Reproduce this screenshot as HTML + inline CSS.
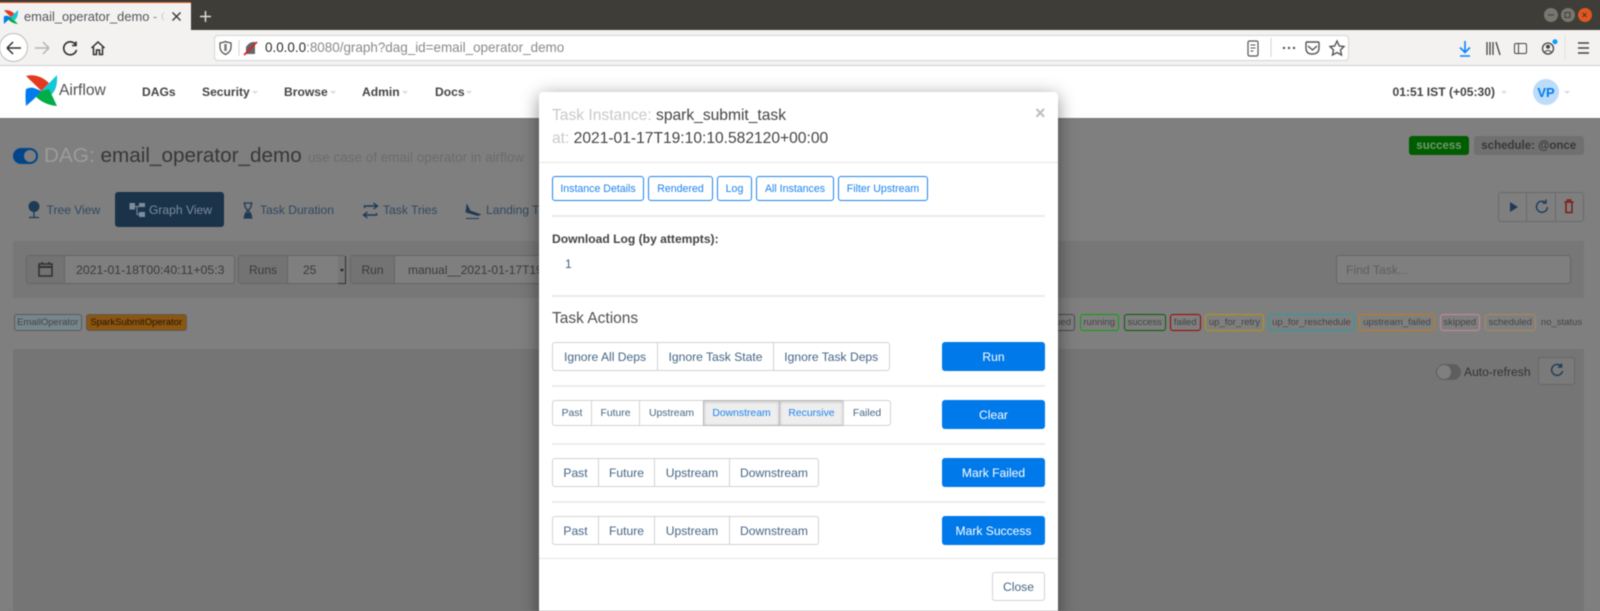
<!DOCTYPE html>
<html><head><meta charset="utf-8"><title>email_operator_demo</title>
<style>
html,body{margin:0;padding:0;width:1600px;height:605px;overflow:hidden;background:#7f7f7f;font-family:"Liberation Sans",sans-serif;}
#w{position:absolute;left:-6px;top:-6px;width:1612px;height:617px;overflow:hidden;filter:blur(.4px);background:#7f7f7f;}
#i{position:absolute;left:6px;top:6px;width:1600px;height:605px;}
.c{display:flex;align-items:center;justify-content:center;}
.t{position:absolute;white-space:nowrap;line-height:1;}
.b{position:absolute;box-sizing:border-box;}
.g{position:absolute;box-sizing:border-box;display:flex;align-items:center;justify-content:center;white-space:nowrap;background:#fff;border:1px solid #d2d2d2;color:#456585;}
.s{font-size:12.100px;height:29px;}
.x{font-size:10.400px;height:26px;}
.l{border-color:#1c83ee;border-radius:3px;color:#1c83ee;font-size:10.600px;top:176px;height:25px;}
.on{background:#eee;border-color:#b5b5b5;color:#1c83ee;box-shadow:inset 0 1px 3px rgba(0,0,0,.18);}
.blue{position:absolute;left:942px;width:103px;height:29px;background:#0079ea;color:#fff;font-size:12.100px;border-radius:3px;display:flex;align-items:center;justify-content:center;}
.hr{position:absolute;left:552px;width:493px;height:1.500px;background:#ececec;}
.leg{position:absolute;top:314px;height:17px;box-sizing:border-box;border:1.500px solid #555;border-radius:3px;font-size:9.500px;color:#444;display:flex;align-items:center;justify-content:center;white-space:nowrap;}
.nav{position:absolute;top:85px;font-size:12.100px;font-weight:bold;color:#444;line-height:14px;white-space:nowrap;}
.caret{position:absolute;width:0;height:0;border-left:3px solid transparent;border-right:3px solid transparent;border-top:3px solid #e0d8e0;}
.tb{position:absolute;top:204px;font-size:12.100px;line-height:1;color:#30495f;white-space:nowrap;}
svg{position:absolute;overflow:visible;}
</style></head><body><div id="w"><div id="i">

<!-- browser chrome -->
<div class="b" style="left:-6px;top:-6px;width:1612px;height:36px;background:#3e3d37;"></div>
<div class="b" style="left:-6px;top:2px;width:197px;height:28px;background:#f3f2f1;border-top:1.500px solid #e2561e;"></div>
<svg style="left:4px;top:10px" width="14" height="14" viewBox="0 0 31 31"><path d="M0 1Q12-2 23 8L15.500 16Z" fill="#e43921"/><path d="M31 0Q32 14 24 23L15.500 16Z" fill="#11c8d8"/><path d="M31 31Q18 30 9 21L15.500 16Z" fill="#00ad46"/><path d="M0 31Q-1 20 0 14Q4 12 8 13L15.500 16Z" fill="#017cee"/></svg>
<div class="t" style="left:24px;top:8px;font-size:12.900px;line-height:18px;color:#55555a;width:141px;overflow:hidden;">email_operator_demo - O</div>
<div class="b" style="left:150px;top:6px;width:16px;height:20px;background:linear-gradient(to right,rgba(243,242,241,0),#f3f2f1);"></div>
<svg style="left:171px;top:11px" width="11" height="11"><path d="M1.500 1.500L9.500 9.500M9.500 1.500L1.500 9.500" stroke="#333" stroke-width="1.300"/></svg>
<svg style="left:199px;top:10px" width="13" height="13"><path d="M6.500 1V12M1 6.500H12" stroke="#ddd" stroke-width="1.500"/></svg>
<div class="b" style="left:1544px;top:7.500px;width:14px;height:14px;border-radius:50%;background:#77766f;"></div>
<div class="b" style="left:1561px;top:7.500px;width:14px;height:14px;border-radius:50%;background:#77766f;"></div>
<div class="b" style="left:1578px;top:7.500px;width:14px;height:14px;border-radius:50%;background:#e2561e;"></div>
<svg style="left:1544px;top:7.500px" width="48" height="14"><path d="M4 7H10" stroke="#3e3d37"/><rect x="21" y="4.500" width="5" height="5" fill="none" stroke="#3e3d37"/><path d="M38.500 5L42.500 9M42.500 5L38.500 9" stroke="#3e3d37"/></svg>

<div class="b" style="left:-6px;top:30px;width:1612px;height:36px;background:#f3f2f1;border-bottom:1px solid #cfcfcf;"></div>
<div class="b" style="left:-1px;top:33px;width:29px;height:29px;border-radius:50%;background:#fff;border:1px solid #bdbdbd;"></div>
<svg style="left:0;top:30px" width="110" height="36"><path d="M7 18H21M7 18L13 12M7 18L13 24" fill="none" stroke="#2e2e2e" stroke-width="1.500"/><path d="M35 18H49M49 18L43 12M49 18L43 24" fill="none" stroke="#b4b4b4" stroke-width="1.500"/><path d="M75.500 14.500A6.500 6.500 0 1 0 76.500 20M76 11.500V15.500H72" fill="none" stroke="#2e2e2e" stroke-width="1.600"/><path d="M91.500 18L98 12L104.500 18M93.500 17V24.500H96.500V20H99.500V24.500H102.500V17" fill="none" stroke="#2e2e2e" stroke-width="1.500"/></svg>
<div class="b" style="left:214px;top:35px;width:1135px;height:26px;background:#fff;border:1px solid #d4d4d4;border-radius:4px;"></div>
<svg style="left:214px;top:35px" width="60" height="26"><path d="M6 8Q11 7 11.500 6.500Q12 7 17 8V12Q17 17 11.500 19.500Q6 17 6 12Z" fill="none" stroke="#555" stroke-width="1.300"/><path d="M11.500 9V16" stroke="#777" stroke-width="2.500"/><path d="M25 5V21" stroke="#d4d4d4"/><path d="M32 19V12Q36 6 41 7V19Z" fill="#666"/><path d="M30 20L43 7" stroke="#e01b24" stroke-width="1.600"/></svg>
<div class="t" style="left:265px;top:41px;font-size:13.450px;color:#8a8a8a;"><span style="color:#2b2b2b">0.0.0.0</span>:8080/graph?dag_id=email_operator_demo</div>
<svg style="left:1244px;top:38px" width="110" height="22"><rect x="4" y="3" width="10" height="15" rx="1.500" fill="none" stroke="#555" stroke-width="1.200"/><path d="M6.500 7H11.500M6.500 10H11.500M6.500 13H9.500" stroke="#555"/><path d="M27 0V19" stroke="#d4d4d4"/><circle cx="40" cy="10" r="1.200" fill="#555"/><circle cx="45" cy="10" r="1.200" fill="#555"/><circle cx="50" cy="10" r="1.200" fill="#555"/><path d="M62 4H74Q75 4 75 5V10Q75 16 68 16Q62 16 62 10V5Q62 4 63 4ZM64 8L68.500 12L73 8" fill="none" stroke="#555" stroke-width="1.400"/><path d="M93 3L95.300 8L100 8.500L96.500 12L97.500 17L93 14.500L88.500 17L89.500 12L86 8.500L90.700 8Z" fill="none" stroke="#555" stroke-width="1.400"/></svg>
<svg style="left:1454px;top:38px" width="140" height="22"><path d="M11 3V14M6 9.500L11 14.500L16 9.500M6 18H16" fill="none" stroke="#0a84ff" stroke-width="1.600"/><path d="M33 4V17M36 4V17M39 4V17M42 4L46 17" fill="none" stroke="#444" stroke-width="1.300"/><circle cx="94" cy="10.500" r="5.500" fill="none" stroke="#444" stroke-width="1.300"/><circle cx="94" cy="8.800" r="2" fill="#444"/><path d="M90.500 14Q94 11 97.500 14" stroke="#444" fill="none"/><circle cx="101" cy="3.700" r="2.500" fill="#0a9cff"/><path d="M111 -3V21" stroke="#e0e0e0"/></svg>
<div class="b" style="left:1514px;top:43px;width:13px;height:11px;border:1.300px solid #444;border-radius:2px;"></div>
<div class="b" style="left:1518px;top:43px;width:1px;height:11px;background:#444;"></div>
<svg style="left:1578px;top:41px" width="12" height="14"><path d="M0 2H11M0 7H11M0 12H11" stroke="#444" stroke-width="1.500"/></svg>

<!-- page nav -->
<div class="b" style="left:-6px;top:66px;width:1612px;height:53px;background:#fff;border-bottom:1px solid #777;"></div>
<svg style="left:26px;top:75px" width="31" height="31" viewBox="0 0 31 31"><path d="M0 1Q12-2 23 8L15.500 16Z" fill="#e43921"/><path d="M31 0Q32 14 25 20L15.500 16Z" fill="#11c8d8"/><path d="M31 31Q18 30 9 21L15.500 16L23 14Z" fill="#00ad46"/><path d="M0 31Q-1 20 0 14Q4 12 8 13L15.500 16L8 24Z" fill="#017cee"/></svg>
<div class="t" style="left:59px;top:83px;font-size:15.600px;color:#51504f;">Airflow</div>
<div class="nav" style="left:142px;">DAGs</div>
<div class="nav" style="left:202px;">Security</div><div class="caret" style="left:252px;top:91px"></div>
<div class="nav" style="left:284px;">Browse</div><div class="caret" style="left:330px;top:91px"></div>
<div class="nav" style="left:362px;">Admin</div><div class="caret" style="left:402px;top:91px"></div>
<div class="nav" style="left:435px;">Docs</div><div class="caret" style="left:466px;top:91px"></div>
<div class="nav" style="left:1392.500px;">01:51 IST (+05:30)</div><div class="caret" style="left:1501px;top:91px"></div>
<div class="b c" style="left:1533px;top:79px;width:26px;height:26px;border-radius:50%;background:#bcdcfa;color:#017cee;font-size:13px;font-weight:bold;">VP</div>
<div class="caret" style="left:1564px;top:91px"></div>

<!-- dimmed page -->
<div class="b" style="left:13px;top:148px;width:25px;height:16px;border-radius:8px;background:#00458a;"></div>
<div class="b" style="left:24px;top:150px;width:12px;height:12px;border-radius:50%;background:#7f7f7f;"></div>
<div class="t" style="left:44px;top:145.500px;font-size:20.700px;color:#9c9c9c;">DAG:</div>
<div class="t" style="left:100.500px;top:145.500px;font-size:20.700px;color:#373737;">email_operator_demo</div>
<div class="t" style="left:308px;top:151px;font-size:13.500px;color:#6c6c6c;">use case of email operator in airflow</div>
<div class="b c" style="left:1409px;top:136px;width:60px;height:19px;border-radius:3px;background:#005c00;color:#6d9a6d;font-size:11.500px;font-weight:bold;">success</div>
<div class="b c" style="left:1474px;top:136px;width:109.500px;height:19px;border-radius:3px;background:#707070;color:#373737;font-size:11.500px;font-weight:bold;">schedule: @once</div>

<div class="b" style="left:115px;top:192px;width:109px;height:35px;border-radius:3px;background:#1a3349;"></div>
<div class="tb" style="left:46.500px;">Tree View</div>
<div class="tb" style="left:149px;color:#7c8d9e;">Graph View</div>
<div class="tb" style="left:260px;">Task Duration</div>
<div class="tb" style="left:383px;">Task Tries</div>
<div class="tb" style="left:486px;">Landing Times</div>
<svg style="left:25px;top:200px" width="480" height="22"><circle cx="9" cy="6.500" r="5.500" fill="#1e3a55"/><path d="M9 12V17M4 17.500H14" stroke="#1e3a55" stroke-width="1.300"/><path d="M104.500 3H110V9.500H104.500ZM114 3H120V7H114ZM114 12H120V17H114ZM110 6H114V7H112.500V14H114V15H111.500V7H110Z" fill="#7c8d9e"/><g transform="translate(3.500 0)"><path d="M215 3H224M215 18H224M216 3Q216 8 219.500 10.500Q216 13 216 18H223Q223 13 219.500 10.500Q223 8 223 3" fill="none" stroke="#1e3a55" stroke-width="1.300"/><path d="M216 18Q216 14 219.500 12Q223 14 223 18Z" fill="#1e3a55"/></g><g transform="translate(5.500 0)"><path d="M334 8V6H346M343 3L347 6L343 9M346 13V15H334M337 12L333 15L337 18" fill="none" stroke="#1e3a55" stroke-width="1.400"/></g><g transform="translate(5 0)"><path d="M436 18.500H449M437 5L440 11L450 14.500L448 15.500L436 12Z" fill="#1e3a55" stroke="#1e3a55"/></g></svg>

<div class="b" style="left:1498px;top:192px;width:85.500px;height:30px;border:1px solid #6a6a6a;border-radius:3px;"></div>
<div class="b" style="left:1526px;top:192px;width:1px;height:30px;background:#6a6a6a;"></div>
<div class="b" style="left:1555px;top:192px;width:1px;height:30px;background:#6a6a6a;"></div>
<svg style="left:1498px;top:192px" width="85" height="30"><path d="M12 10L20 15L12 20Z" fill="#1d3b58"/><path d="M47.500 10.500A5.500 5.500 0 1 0 49.500 15M48 7.500V11H44.500" fill="none" stroke="#1d3b58" stroke-width="1.400"/><path d="M66.500 10H75.500M68 10V20.500H74V10M69.500 10V8H72.500V10" fill="none" stroke="#7e1c14" stroke-width="1.500"/></svg>

<div class="b" style="left:13px;top:241px;width:1570.500px;height:57px;background:#777;"></div>
<div class="b" style="left:26px;top:255px;width:209px;height:29px;border:1px solid #656565;border-radius:3px;background:#7f7f7f;"></div>
<div class="b" style="left:27px;top:256px;width:38px;height:27px;background:#737373;border-right:1px solid #656565;"></div>
<svg style="left:38px;top:261px" width="16" height="17"><rect x="1" y="3" width="13" height="12" fill="none" stroke="#2f2f2f" stroke-width="1.500"/><path d="M1 6H14" stroke="#2f2f2f" stroke-width="2"/><path d="M4 1V3M11 1V3" stroke="#2f2f2f" stroke-width="1.500"/></svg>
<div class="t" style="left:76px;top:264px;font-size:12.300px;color:#3a3a3a;width:149px;overflow:hidden;">2021-01-18T00:40:11+05:30</div>
<div class="b" style="left:238px;top:255px;width:107.500px;height:29px;border:1px solid #656565;border-radius:3px;background:#7f7f7f;"></div>
<div class="b c" style="left:239px;top:256px;width:49px;height:27px;background:#737373;border-right:1px solid #656565;color:#3a3a3a;font-size:12px;">Runs</div>
<div class="t" style="left:303px;top:264px;font-size:12px;color:#3a3a3a;">25</div>
<div class="b" style="left:338px;top:256px;width:7.500px;height:28px;background:#777;border-right:1.500px solid #333;border-bottom:1.500px solid #333;"></div>
<div class="b" style="left:340px;top:269px;width:0;height:0;border-left:2px solid transparent;border-right:2px solid transparent;border-top:3px solid #222;"></div>
<div class="b" style="left:350px;top:255px;width:194px;height:29px;border:1px solid #656565;border-right:0;border-radius:3px 0 0 3px;background:#7f7f7f;"></div>
<div class="b c" style="left:351px;top:256px;width:44px;height:27px;background:#737373;border-right:1px solid #656565;color:#3a3a3a;font-size:12px;">Run</div>
<div class="t" style="left:408px;top:264px;font-size:12px;color:#3a3a3a;">manual__2021-01-17T19:10</div>
<div class="b" style="left:1335.500px;top:255px;width:235.500px;height:29px;border:1px solid #656565;border-radius:3px;background:#7f7f7f;"></div>
<div class="t" style="left:1346px;top:264px;font-size:12.200px;color:#5e5e5e;">Find Task...</div>

<div class="leg" style="left:13.500px;width:68.500px;background:#76878c;border-color:#5a5a5a;">EmailOperator</div>
<div class="leg" style="left:86px;width:100.500px;background:#8b5512;border-color:#5a5a5a;color:#241503;">SparkSubmitOperator</div>
<div class="leg" style="left:1040px;width:35px;border-color:#4a4a4a;justify-content:flex-end;padding-right:3px;">ued</div>
<div class="leg" style="left:1079.500px;width:39.500px;border-color:#0aa00a;">running</div>
<div class="leg" style="left:1124px;width:41.500px;border-color:#0a5a0a;">success</div>
<div class="leg" style="left:1170px;width:30.500px;border-color:#a00000;">failed</div>
<div class="leg" style="left:1205px;width:59px;border-color:#b8960a;">up_for_retry</div>
<div class="leg" style="left:1268px;width:87px;border-color:#20a0a0;">up_for_reschedule</div>
<div class="leg" style="left:1359px;width:76px;border-color:#c87a10;">upstream_failed</div>
<div class="leg" style="left:1439.500px;width:40.500px;border-color:#c88a9a;">skipped</div>
<div class="leg" style="left:1484.500px;width:51.500px;border-color:#a88a5e;">scheduled</div>
<div class="leg" style="left:1541px;width:41px;border:0;">no_status</div>

<div class="b" style="left:13px;top:349px;width:1570.500px;height:262px;background:#757575;"></div>
<div class="b" style="left:1436px;top:364px;width:24.500px;height:16px;border-radius:8px;background:#5e5e5e;"></div>
<div class="b" style="left:1437px;top:365px;width:14px;height:14px;border-radius:50%;background:#7f7f7f;"></div>
<div class="t" style="left:1464px;top:365.500px;font-size:12.100px;color:#333;">Auto-refresh</div>
<div class="b" style="left:1538px;top:357px;width:37px;height:28px;border:1px solid #666;border-radius:3px;background:#7a7a7a;"></div>
<svg style="left:1549px;top:362px" width="16" height="16"><path d="M12 4A5.500 5.500 0 1 0 13.500 9M12.500 1.500V5H9" fill="none" stroke="#1d3b58" stroke-width="1.400"/></svg>

<!-- modal -->
<div class="b" style="left:539px;top:92px;width:519px;height:530px;background:#fff;border-radius:4px;box-shadow:0 4px 18px rgba(0,0,0,.45);"></div>
<div class="t" style="left:552px;top:108px;font-size:15.600px;color:#c9c9c9;">Task Instance: <span style="color:#444">spark_submit_task</span></div>
<div class="t" style="left:552px;top:131px;font-size:15.600px;color:#c9c9c9;">at: <span style="color:#444">2021-01-17T19:10:10.582120+00:00</span></div>
<div class="t" style="left:1035px;top:104px;font-size:18px;font-weight:bold;color:#bdbdbd;">×</div>
<div class="b" style="left:539px;top:162px;width:519px;height:1px;background:#e6e6e6;"></div>

<div class="g l" style="left:552px;width:92px;">Instance Details</div>
<div class="g l" style="left:648px;width:65px;">Rendered</div>
<div class="g l" style="left:717px;width:35px;">Log</div>
<div class="g l" style="left:756px;width:78px;">All Instances</div>
<div class="g l" style="left:838px;width:90px;">Filter Upstream</div>
<div class="hr" style="top:215px"></div>
<div class="t" style="left:552px;top:232.500px;font-size:12.100px;font-weight:bold;color:#444;">Download Log (by attempts):</div>
<div class="t" style="left:565px;top:258px;font-size:12px;color:#3a5f85;">1</div>
<div class="hr" style="top:295px"></div>
<div class="t" style="left:552px;top:311px;font-size:15.500px;color:#51504f;">Task Actions</div>

<div class="g s" style="left:552px;top:342px;width:106px;border-radius:3px 0 0 3px;">Ignore All Deps</div>
<div class="g s" style="left:657px;top:342px;width:117px;">Ignore Task State</div>
<div class="g s" style="left:773px;top:342px;width:116.500px;border-radius:0 3px 3px 0;">Ignore Task Deps</div>
<div class="blue" style="top:342px">Run</div>
<div class="hr" style="top:385px"></div>

<div class="g x" style="left:552px;top:400px;width:40px;border-radius:3px 0 0 3px;">Past</div>
<div class="g x" style="left:591px;top:400px;width:49px;">Future</div>
<div class="g x" style="left:639px;top:400px;width:65px;">Upstream</div>
<div class="g x on" style="left:703px;top:400px;width:77px;">Downstream</div>
<div class="g x on" style="left:779px;top:400px;width:65px;">Recursive</div>
<div class="g x" style="left:843px;top:400px;width:48px;border-radius:0 3px 3px 0;">Failed</div>
<div class="blue" style="top:400px">Clear</div>
<div class="hr" style="top:443px"></div>

<div class="g s" style="left:552px;top:458px;width:47px;border-radius:3px 0 0 3px;">Past</div>
<div class="g s" style="left:598px;top:458px;width:57px;">Future</div>
<div class="g s" style="left:654px;top:458px;width:76px;">Upstream</div>
<div class="g s" style="left:729px;top:458px;width:90px;border-radius:0 3px 3px 0;">Downstream</div>
<div class="blue" style="top:458px">Mark Failed</div>
<div class="hr" style="top:501px"></div>

<div class="g s" style="left:552px;top:516px;width:47px;border-radius:3px 0 0 3px;">Past</div>
<div class="g s" style="left:598px;top:516px;width:57px;">Future</div>
<div class="g s" style="left:654px;top:516px;width:76px;">Upstream</div>
<div class="g s" style="left:729px;top:516px;width:90px;border-radius:0 3px 3px 0;">Downstream</div>
<div class="blue" style="top:516px">Mark Success</div>

<div class="b" style="left:539px;top:558px;width:519px;height:1px;background:#e6e6e6;"></div>
<div class="g s" style="left:992px;top:572px;width:53px;border-radius:3px;">Close</div>
</div></div></body></html>
